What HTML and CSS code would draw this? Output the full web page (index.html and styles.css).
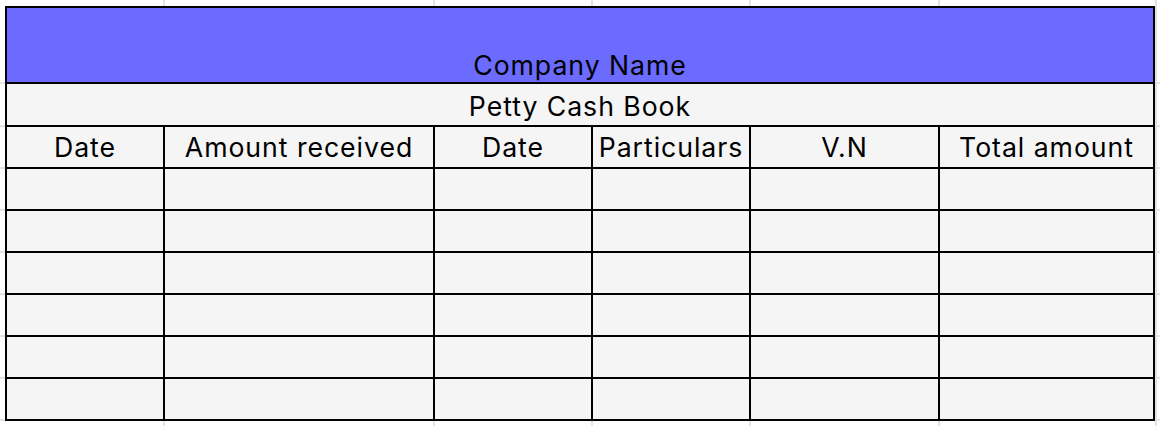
FILE: index.html
```html
<!DOCTYPE html>
<html lang="en">
<head>
<meta charset="utf-8">
<title>Petty Cash Book</title>
<link rel="stylesheet" href="styles.css">
</head>
<body>
<div class="book">
  <div class="cell company">Company Name</div>
  <div class="cell subtitle">Petty Cash Book</div>
  <div class="cell head">Date</div>
  <div class="cell head">Amount received</div>
  <div class="cell head">Date</div>
  <div class="cell head">Particulars</div>
  <div class="cell head">V.N</div>
  <div class="cell head">Total amount</div>
  <div class="cell"></div><div class="cell"></div><div class="cell"></div><div class="cell"></div><div class="cell"></div><div class="cell"></div>
  <div class="cell"></div><div class="cell"></div><div class="cell"></div><div class="cell"></div><div class="cell"></div><div class="cell"></div>
  <div class="cell"></div><div class="cell"></div><div class="cell"></div><div class="cell"></div><div class="cell"></div><div class="cell"></div>
  <div class="cell"></div><div class="cell"></div><div class="cell"></div><div class="cell"></div><div class="cell"></div><div class="cell"></div>
  <div class="cell"></div><div class="cell"></div><div class="cell"></div><div class="cell"></div><div class="cell"></div><div class="cell"></div>
  <div class="cell"></div><div class="cell"></div><div class="cell"></div><div class="cell"></div><div class="cell"></div><div class="cell"></div>
</div>
</body>
</html>
```
FILE: styles.css
```css
html, body {
  margin: 0;
  padding: 0;
}
body {
  width: 1160px;
  height: 426px;
  overflow: hidden;
  font-family: "Inter", "Liberation Sans", sans-serif;
  color: #000;
  background-color: #fff;
  background-repeat: no-repeat;
  background-image:
    linear-gradient(#e2e2e2, #e2e2e2),
    linear-gradient(#e2e2e2, #e2e2e2),
    linear-gradient(#e2e2e2, #e2e2e2),
    linear-gradient(#e2e2e2, #e2e2e2),
    linear-gradient(#e2e2e2, #e2e2e2),
    linear-gradient(#e2e2e2, #e2e2e2),
    linear-gradient(#e2e2e2, #e2e2e2),
    linear-gradient(#e2e2e2, #e2e2e2),
    linear-gradient(#e2e2e2, #e2e2e2),
    linear-gradient(#e2e2e2, #e2e2e2),
    linear-gradient(#e2e2e2, #e2e2e2),
    linear-gradient(#e2e2e2, #e2e2e2),
    linear-gradient(#e2e2e2, #e2e2e2),
    linear-gradient(#e2e2e2, #e2e2e2),
    linear-gradient(#e2e2e2, #e2e2e2);
  background-size:
    2px 100%, 2px 100%, 2px 100%, 2px 100%, 2px 100%, 2px 100%,
    100% 2px, 100% 2px, 100% 2px, 100% 2px, 100% 2px, 100% 2px, 100% 2px, 100% 2px, 100% 2px;
  background-position:
    163px 0, 433px 0, 591px 0, 749px 0, 938px 0, 1155px 0,
    0 82px, 0 125px, 0 167px, 0 209px, 0 251px, 0 293px, 0 335px, 0 377px, 0 419px;
}
.book {
  display: grid;
  box-sizing: border-box;
  width: 1150px;
  margin: 6px 0 0 5px;
  padding: 2px;
  gap: 2px;
  background: #000;
  grid-template-columns: 156px 268px 156px 156px 187px 213px;
  grid-template-rows: 74px 41px 40px repeat(6, 40px);
}
.cell {
  background: #f5f5f5;
  display: flex;
  align-items: center;
  justify-content: center;
  font-size: 26.67px;
  line-height: 32px;
  letter-spacing: 0.95px;
  white-space: nowrap;
}
.company {
  grid-column: 1 / -1;
  background: #6b6bff;
  align-items: flex-end;
  padding-bottom: 1px;
}
.subtitle {
  grid-column: 1 / -1;
  align-items: flex-end;
  padding-bottom: 3px;
}
```
